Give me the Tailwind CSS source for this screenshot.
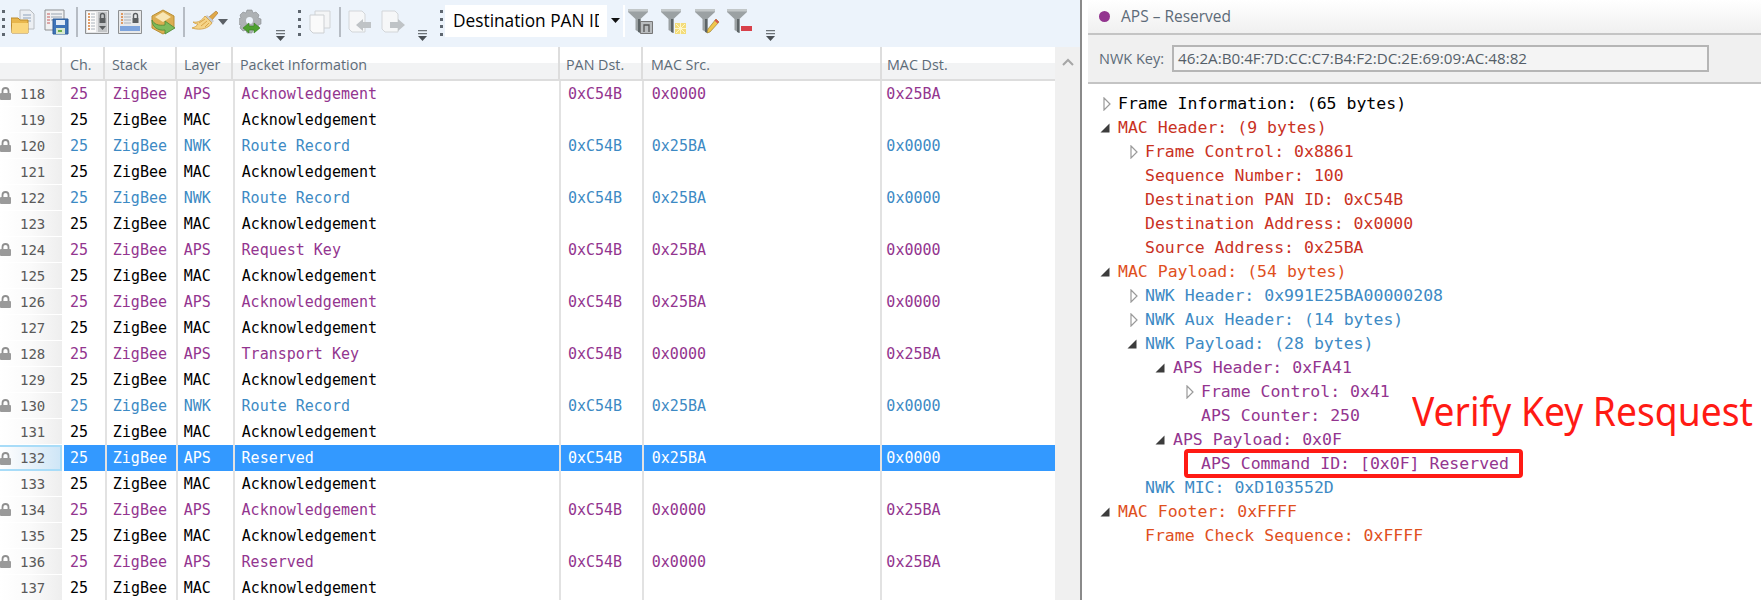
<!DOCTYPE html>
<html lang="en">
<head>
<meta charset="utf-8">
<title>Packet capture</title>
<script src="https://cdn.jsdelivr.net/npm/@tailwindcss/browser@4"></script>
</head>
<body class="bg-white overflow-hidden">
<svg width="0" height="0" class="absolute">
  <defs>
    <symbol id="lock" viewBox="0 0 11 13"><path d="M2.500 7V4a3 3 0 0 1 6 0V7" fill="none" stroke="#8f8f8f" stroke-width="1.800"/><rect x="0" y="6" width="11" height="7" rx="1" fill="#9a9a9a"/></symbol>
    <symbol id="grip" viewBox="0 0 3 26"><path d="M0 0h3v3H0zM0 8h3v3H0zM0 15h3v3H0zM0 23h3v3H0z" fill="#5f6770"/></symbol>
    <symbol id="over" viewBox="0 0 11 11"><path d="M1 0h9v1.200H1zM1 3h9v1.200H1z" fill="#6d7378"/><path d="M1 6h9l-4.500 5z" fill="#4a4f54"/></symbol>
    <symbol id="funnel" viewBox="0 0 20 26"><path d="M0 1h20v3l-7.500 7v14l-5-3V11L0 4z" fill="#9ba1a3"/><path d="M0 1h20v2.500H0z" fill="#c2c7c8"/><path d="M10 11h2.500v14L10 24z" fill="#5d6466"/></symbol>
    <symbol id="tr-o" viewBox="0 0 8 14"><path d="M1 1l6 6-6 6z" fill="#fff" stroke="#9a9a9a" stroke-width="1.200"/></symbol>
    <symbol id="tr-f" viewBox="0 0 10 10"><path d="M9.500 .5v9h-9z" fill="#3c3c3c"/></symbol>
  </defs>
</svg>

<div class="flex w-[1761px] h-[600px] overflow-hidden font-['Open_Sans',sans-serif]">
  <!-- LEFT PANE -->
  <div class="w-[1082px] shrink-0 flex flex-col border-r-2 border-[#8a8a8a] relative">
    <div class="absolute top-0 left-[133px] right-0 h-[2px] bg-[#666666]"></div>
    <!-- toolbar -->
    <div class="h-[47px] shrink-0 bg-[#ecf3fb] relative flex items-center pl-[2px]">
      <svg class="shrink-0 w-[3px] h-[26px] mt-[-2px]"><use href="#grip"/></svg>
      <!-- open -->
      <svg class="shrink-0 ml-[6px] mt-[-4px]" width="24" height="26" viewBox="0 0 24 26"><path d="M9 1h10l4 4v15H9z" fill="#eceff3" stroke="#b8bcc0"/><path d="M12 6h8M12 9h8M12 12h8" stroke="#8fa3bc"/><path d="M0 9h7l2 2h8v13H1z" fill="#e8b64c" stroke="#bb8a2c"/><path d="M1 14h16v10H1z" fill="#fad67c"/></svg>
      <!-- save -->
      <svg class="shrink-0 ml-[9px] mt-[-4px]" width="25" height="26" viewBox="0 0 25 26"><path d="M1 1h19v20H1z" fill="#f0f1f2" stroke="#8d8f91"/><path d="M3 5h3M3 8h3M3 11h3M3 14h3" stroke="#c75a5a"/><path d="M7 5h11M7 8h11M7 11h5" stroke="#9aa5b1"/><path d="M9 10h15v15H9z" fill="#3f74b8" stroke="#2c5a96"/><path d="M12 11h9v5h-9z" fill="#e3ecf6"/><path d="M12 19h9v6h-9z" fill="#d8e8d0"/><path d="M14 21h4v2h-4z" fill="#6bb04a"/></svg>
      <div class="shrink-0 w-[2px] h-[30px] bg-[#b6bcc4] ml-[7px] mt-[-3px]"></div>
      <!-- book lock -->
      <svg class="shrink-0 ml-[7px] mt-[-4px]" width="24" height="24" viewBox="0 0 24 24"><path d="M.5.500h23v23H.5z" fill="#e3e4e6" stroke="#8e9092"/><path d="M2 2h9v20H2z" fill="#fbfbfb"/><path d="M3 4h2M3 7h2M3 10h2M3 13h2M3 16h2M3 19h2" stroke="#d9803a" stroke-width="1.500"/><path d="M6 4h4M6 7h4M6 10h4M6 13h4M6 16h4M6 19h4" stroke="#aab2bb"/><path d="M13 2h9v20h-9z" fill="#c3c5c7"/><path d="M15.500 8V5.500a2 2 0 0 1 4 0V8" fill="none" stroke="#5b5e60" stroke-width="1.400"/><rect x="14.500" y="8" width="6" height="5" fill="#5b5e60"/><path d="M14 16h7l-3.500 4z" fill="#5b5e60"/></svg>
      <!-- list lock -->
      <svg class="shrink-0 ml-[9px] mt-[-4px]" width="24" height="24" viewBox="0 0 24 24"><path d="M.5.500h23v23H.5z" fill="#e8e9ea" stroke="#8e9092"/><path d="M3 4h2M3 7h2M3 10h2M3 13h2" stroke="#d9803a" stroke-width="1.500"/><path d="M6 4h7M6 7h7M6 10h7M6 13h7" stroke="#aab2bb"/><path d="M15.500 8V5.500a2 2 0 0 1 4 0V8" fill="none" stroke="#5b5e60" stroke-width="1.400"/><rect x="14.500" y="8" width="6" height="5" fill="#5b5e60"/><path d="M2 16h20v5H2z" fill="#7ea4dc"/></svg>
      <!-- hex -->
      <svg class="shrink-0 ml-[9px] mt-[-4px]" width="25" height="26" viewBox="0 0 25 26"><path d="M12 1l11 6v12l-11 6-11-6V7z" fill="#dcae52" stroke="#b98f34"/><path d="M12 3l8 5-8 5-8-5z" fill="#f8e6b4"/><path d="M1 11c2 4 6 6 13 5v-4l10 7-10 6v-4C7 22 1 18 1 11z" fill="#7dbb5c" stroke="#4d8a36" stroke-width=".8"/></svg>
      <div class="shrink-0 w-[2px] h-[30px] bg-[#b6bcc4] ml-[7px] mt-[-3px]"></div>
      <!-- brush -->
      <svg class="shrink-0 ml-[7px] mt-[-5px]" width="26" height="22" viewBox="0 0 26 22"><path d="M17 7l7-6 2 2-6 7z" fill="#e0a848" stroke="#a5702a" stroke-width=".6"/><path d="M15 5l7 6-2 2-7-6z" fill="#c7cace"/><path d="M13 6l7 7c-3 5-11 8-20 5 3-1 5-2 6-4-2 0-4-1-5-2 6 1 9-2 12-6z" fill="#f5d488" stroke="#cf9c3f" stroke-width=".8"/><path d="M7 13l6-4M9 16l6-5M13 17l4-4" stroke="#d9a448"/></svg>
      <svg class="shrink-0 mt-[-4px]" width="10" height="6" viewBox="0 0 10 6"><path d="M0 0h10L5 6z" fill="#5b6066"/></svg>
      <!-- gear -->
      <svg class="shrink-0 ml-[11px] mt-[-4px]" width="25" height="26" viewBox="0 0 25 26"><path d="M8 1h5l1 3 3-1 3 3-1 3 3 1v5l-3 1 1 3-3 3-3-1-1 3H8l-1-3-3 1-3-3 1-3-3-1v-5l3-1-1-3 3-3 3 1z" fill="#adb1b4" stroke="#888c8f" stroke-width=".6"/><circle cx="10.500" cy="11.500" r="3.500" fill="#ecf3fb"/><path d="M4 19l6-5v3h5v-3l6 5-6 5v-3h-5v3z" fill="#4ea12f" stroke="#357d1c" stroke-width=".6"/></svg>
      <svg class="shrink-0 ml-[11px] mt-[23px] w-[11px] h-[11px]"><use href="#over"/></svg>
      <svg class="shrink-0 ml-[12px] mt-[-2px] w-[3px] h-[26px]"><use href="#grip"/></svg>
      <!-- copy -->
      <svg class="shrink-0 ml-[8px] mt-[-3px]" width="22" height="24" viewBox="0 0 22 24"><path d="M6 1h15v17H6z" fill="#f4f5f6" stroke="#d0d3d6"/><path d="M1 5h14v18H4l-3-3z" fill="#fafafa" stroke="#cdd0d3"/></svg>
      <div class="shrink-0 w-[2px] h-[30px] bg-[#b6bcc4] ml-[8px] mt-[-3px]"></div>
      <!-- prev -->
      <svg class="shrink-0 ml-[7px] mt-[-3px]" width="24" height="24" viewBox="0 0 24 24"><path d="M1 1h13l3 3v18H4l-3-3z" fill="#f6f7f8" stroke="#d3d6d9"/><path d="M8 15l7-6v3h8v6h-8v3z" fill="#bfc3c6"/></svg>
      <!-- next -->
      <svg class="shrink-0 ml-[9px] mt-[-3px]" width="24" height="24" viewBox="0 0 24 24"><path d="M1 1h13l3 3v18H4l-3-3z" fill="#f6f7f8" stroke="#d3d6d9"/><path d="M24 15l-7-6v3H9v6h8v3z" fill="#bfc3c6"/></svg>
      <svg class="shrink-0 ml-[12px] mt-[23px] w-[11px] h-[11px]"><use href="#over"/></svg>
      <svg class="shrink-0 ml-[12px] mt-[-2px] w-[3px] h-[26px]"><use href="#grip"/></svg>
      <!-- combo -->
      <div class="shrink-0 ml-[2px] w-[180px] h-[32px] bg-white flex items-center mt-[-6px]">
        <span class="w-[154px] pl-[8px] overflow-hidden whitespace-nowrap text-[17.3px] text-black">Destination PAN ID</span>
        <span class="ml-[8px] w-[16px] h-[32px] bg-[#ecf3fb] flex items-center justify-center"><svg width="9" height="5" viewBox="0 0 9 5"><path d="M0 0h9L4.500 5z" fill="#111"/></svg></span>
      </div>
      <!-- funnels -->
      <div class="relative shrink-0 ml-[3px] w-[25px] h-[26px] mt-[-6px]"><svg class="w-[20px] h-[26px]"><use href="#funnel"/></svg><svg class="absolute right-0 bottom-0" width="13" height="13" viewBox="0 0 13 13"><path d="M.5.500h12v12H.5z" fill="#b9bcbe" stroke="#777"/><path d="M4 11V4h5v7" fill="none" stroke="#555" stroke-width="1.300"/></svg></div>
      <div class="relative shrink-0 ml-[8px] w-[25px] h-[26px] mt-[-6px]"><svg class="w-[20px] h-[26px]"><use href="#funnel"/></svg><svg class="absolute right-0 bottom-0" width="11" height="11" viewBox="0 0 11 11"><path d="M0 0h11v11H0z" fill="#f3dc7a"/><path d="M5.500 0v11M0 5.500h11M1 1l9 9M10 1l-9 9" stroke="#fff6c8"/></svg></div>
      <div class="relative shrink-0 ml-[9px] w-[25px] h-[26px] mt-[-6px]"><svg class="w-[20px] h-[26px]"><use href="#funnel"/></svg><svg class="absolute right-0 bottom-0" width="14" height="16" viewBox="0 0 14 16"><path d="M10 1l3 3-9 10-3 1 1-4z" fill="#f0c64c" stroke="#8f7324" stroke-width=".6"/><path d="M10 1l3 3-1.500 1.500-3-3z" fill="#d8564c"/></svg></div>
      <div class="relative shrink-0 ml-[7px] w-[25px] h-[26px] mt-[-6px]"><svg class="w-[20px] h-[26px]"><use href="#funnel"/></svg><div class="absolute right-0 bottom-[3px] w-[11px] h-[5px] bg-[#d8404a]"></div></div>
      <svg class="shrink-0 ml-[13px] mt-[23px] w-[11px] h-[11px]"><use href="#over"/></svg>
    </div>

    <!-- table -->
    <div class="flex-1 flex min-h-0 bg-white">
      <div class="w-[1055px] shrink-0 overflow-hidden">
        <!-- header -->
        <div class="h-[34px] flex text-[14.3px] text-[#5d6b78] bg-[linear-gradient(#ffffff_0,#ffffff_16px,#f2f3f4_16px,#f2f3f4_100%)] border-b-[2px] border-[#dddddd]">
          <div class="w-[62px] border-r-[2px] border-[#dddddd]"></div>
          <div class="w-[43px] pl-[8px] pt-[7px] border-r-[2px] border-[#dddddd]">Ch.</div>
          <div class="w-[72px] pl-[7px] pt-[7px] border-r-[2px] border-[#dddddd]">Stack</div>
          <div class="w-[56px] pl-[7px] pt-[7px] border-r-[2px] border-[#dddddd]">Layer</div>
          <div class="w-[327px] pl-[7px] pt-[7px] border-r-[2px] border-[#dddddd]">Packet Information</div>
          <div class="w-[83px] pl-[6px] pt-[7px] border-r-[2px] border-[#dddddd]">PAN Dst.</div>
          <div class="w-[239px] pl-[8px] pt-[7px] border-r-[2px] border-[#dddddd]">MAC Src.</div>
          <div class="w-[173px] pl-[5px] pt-[7px]">MAC Dst.</div>
        </div>
        <!-- rows -->
        <div class="font-['DejaVu_Sans_Mono',monospace] text-[15px] leading-[26px] whitespace-nowrap">
          <div class="h-[26px] flex text-[#93358f]"><div class="w-[62px] mr-[2px] h-[25px] bg-[linear-gradient(90deg,#ffffff,#fafafa_50%,#eeeeee)] flex items-center"><svg class="w-[11px] h-[13px]"><use href="#lock"/></svg><span class="ml-[9px] text-[14px] text-[#5a5a5a]">118</span></div><div class="w-[41px] pl-[6px]">25</div><div class="w-[71px] pl-[6px] border-l-[2px] border-[#e2e2e2]">ZigBee</div><div class="w-[57px] pl-[6px] border-l-[2px] border-[#e2e2e2]">APS</div><div class="w-[327px] pl-[7px] border-l-[2px] border-[#e2e2e2]">Acknowledgement</div><div class="w-[83px] pl-[7px] border-l-[2px] border-[#e2e2e2]">0xC54B</div><div class="w-[239px] pl-[8px] border-l-[2px] border-[#e2e2e2]">0x0000</div><div class="w-[175px] pl-[4px] border-l-[2px] border-[#e2e2e2]">0x25BA</div></div>
          <div class="h-[26px] flex text-black"><div class="w-[62px] mr-[2px] h-[25px] bg-[linear-gradient(90deg,#ffffff,#fafafa_50%,#eeeeee)] flex items-center pl-[20px]"><span class="text-[14px] text-[#5a5a5a]">119</span></div><div class="w-[41px] pl-[6px]">25</div><div class="w-[71px] pl-[6px] border-l-[2px] border-[#e2e2e2]">ZigBee</div><div class="w-[57px] pl-[6px] border-l-[2px] border-[#e2e2e2]">MAC</div><div class="w-[327px] pl-[7px] border-l-[2px] border-[#e2e2e2]">Acknowledgement</div><div class="w-[83px] border-l-[2px] border-[#e2e2e2]"></div><div class="w-[239px] border-l-[2px] border-[#e2e2e2]"></div><div class="w-[175px] border-l-[2px] border-[#e2e2e2]"></div></div>
          <div class="h-[26px] flex text-[#3d8ac4]"><div class="w-[62px] mr-[2px] h-[25px] bg-[linear-gradient(90deg,#ffffff,#fafafa_50%,#eeeeee)] flex items-center"><svg class="w-[11px] h-[13px]"><use href="#lock"/></svg><span class="ml-[9px] text-[14px] text-[#5a5a5a]">120</span></div><div class="w-[41px] pl-[6px]">25</div><div class="w-[71px] pl-[6px] border-l-[2px] border-[#e2e2e2]">ZigBee</div><div class="w-[57px] pl-[6px] border-l-[2px] border-[#e2e2e2]">NWK</div><div class="w-[327px] pl-[7px] border-l-[2px] border-[#e2e2e2]">Route Record</div><div class="w-[83px] pl-[7px] border-l-[2px] border-[#e2e2e2]">0xC54B</div><div class="w-[239px] pl-[8px] border-l-[2px] border-[#e2e2e2]">0x25BA</div><div class="w-[175px] pl-[4px] border-l-[2px] border-[#e2e2e2]">0x0000</div></div>
          <div class="h-[26px] flex text-black"><div class="w-[62px] mr-[2px] h-[25px] bg-[linear-gradient(90deg,#ffffff,#fafafa_50%,#eeeeee)] flex items-center pl-[20px]"><span class="text-[14px] text-[#5a5a5a]">121</span></div><div class="w-[41px] pl-[6px]">25</div><div class="w-[71px] pl-[6px] border-l-[2px] border-[#e2e2e2]">ZigBee</div><div class="w-[57px] pl-[6px] border-l-[2px] border-[#e2e2e2]">MAC</div><div class="w-[327px] pl-[7px] border-l-[2px] border-[#e2e2e2]">Acknowledgement</div><div class="w-[83px] border-l-[2px] border-[#e2e2e2]"></div><div class="w-[239px] border-l-[2px] border-[#e2e2e2]"></div><div class="w-[175px] border-l-[2px] border-[#e2e2e2]"></div></div>
          <div class="h-[26px] flex text-[#3d8ac4]"><div class="w-[62px] mr-[2px] h-[25px] bg-[linear-gradient(90deg,#ffffff,#fafafa_50%,#eeeeee)] flex items-center"><svg class="w-[11px] h-[13px]"><use href="#lock"/></svg><span class="ml-[9px] text-[14px] text-[#5a5a5a]">122</span></div><div class="w-[41px] pl-[6px]">25</div><div class="w-[71px] pl-[6px] border-l-[2px] border-[#e2e2e2]">ZigBee</div><div class="w-[57px] pl-[6px] border-l-[2px] border-[#e2e2e2]">NWK</div><div class="w-[327px] pl-[7px] border-l-[2px] border-[#e2e2e2]">Route Record</div><div class="w-[83px] pl-[7px] border-l-[2px] border-[#e2e2e2]">0xC54B</div><div class="w-[239px] pl-[8px] border-l-[2px] border-[#e2e2e2]">0x25BA</div><div class="w-[175px] pl-[4px] border-l-[2px] border-[#e2e2e2]">0x0000</div></div>
          <div class="h-[26px] flex text-black"><div class="w-[62px] mr-[2px] h-[25px] bg-[linear-gradient(90deg,#ffffff,#fafafa_50%,#eeeeee)] flex items-center pl-[20px]"><span class="text-[14px] text-[#5a5a5a]">123</span></div><div class="w-[41px] pl-[6px]">25</div><div class="w-[71px] pl-[6px] border-l-[2px] border-[#e2e2e2]">ZigBee</div><div class="w-[57px] pl-[6px] border-l-[2px] border-[#e2e2e2]">MAC</div><div class="w-[327px] pl-[7px] border-l-[2px] border-[#e2e2e2]">Acknowledgement</div><div class="w-[83px] border-l-[2px] border-[#e2e2e2]"></div><div class="w-[239px] border-l-[2px] border-[#e2e2e2]"></div><div class="w-[175px] border-l-[2px] border-[#e2e2e2]"></div></div>
          <div class="h-[26px] flex text-[#93358f]"><div class="w-[62px] mr-[2px] h-[25px] bg-[linear-gradient(90deg,#ffffff,#fafafa_50%,#eeeeee)] flex items-center"><svg class="w-[11px] h-[13px]"><use href="#lock"/></svg><span class="ml-[9px] text-[14px] text-[#5a5a5a]">124</span></div><div class="w-[41px] pl-[6px]">25</div><div class="w-[71px] pl-[6px] border-l-[2px] border-[#e2e2e2]">ZigBee</div><div class="w-[57px] pl-[6px] border-l-[2px] border-[#e2e2e2]">APS</div><div class="w-[327px] pl-[7px] border-l-[2px] border-[#e2e2e2]">Request Key</div><div class="w-[83px] pl-[7px] border-l-[2px] border-[#e2e2e2]">0xC54B</div><div class="w-[239px] pl-[8px] border-l-[2px] border-[#e2e2e2]">0x25BA</div><div class="w-[175px] pl-[4px] border-l-[2px] border-[#e2e2e2]">0x0000</div></div>
          <div class="h-[26px] flex text-black"><div class="w-[62px] mr-[2px] h-[25px] bg-[linear-gradient(90deg,#ffffff,#fafafa_50%,#eeeeee)] flex items-center pl-[20px]"><span class="text-[14px] text-[#5a5a5a]">125</span></div><div class="w-[41px] pl-[6px]">25</div><div class="w-[71px] pl-[6px] border-l-[2px] border-[#e2e2e2]">ZigBee</div><div class="w-[57px] pl-[6px] border-l-[2px] border-[#e2e2e2]">MAC</div><div class="w-[327px] pl-[7px] border-l-[2px] border-[#e2e2e2]">Acknowledgement</div><div class="w-[83px] border-l-[2px] border-[#e2e2e2]"></div><div class="w-[239px] border-l-[2px] border-[#e2e2e2]"></div><div class="w-[175px] border-l-[2px] border-[#e2e2e2]"></div></div>
          <div class="h-[26px] flex text-[#93358f]"><div class="w-[62px] mr-[2px] h-[25px] bg-[linear-gradient(90deg,#ffffff,#fafafa_50%,#eeeeee)] flex items-center"><svg class="w-[11px] h-[13px]"><use href="#lock"/></svg><span class="ml-[9px] text-[14px] text-[#5a5a5a]">126</span></div><div class="w-[41px] pl-[6px]">25</div><div class="w-[71px] pl-[6px] border-l-[2px] border-[#e2e2e2]">ZigBee</div><div class="w-[57px] pl-[6px] border-l-[2px] border-[#e2e2e2]">APS</div><div class="w-[327px] pl-[7px] border-l-[2px] border-[#e2e2e2]">Acknowledgement</div><div class="w-[83px] pl-[7px] border-l-[2px] border-[#e2e2e2]">0xC54B</div><div class="w-[239px] pl-[8px] border-l-[2px] border-[#e2e2e2]">0x25BA</div><div class="w-[175px] pl-[4px] border-l-[2px] border-[#e2e2e2]">0x0000</div></div>
          <div class="h-[26px] flex text-black"><div class="w-[62px] mr-[2px] h-[25px] bg-[linear-gradient(90deg,#ffffff,#fafafa_50%,#eeeeee)] flex items-center pl-[20px]"><span class="text-[14px] text-[#5a5a5a]">127</span></div><div class="w-[41px] pl-[6px]">25</div><div class="w-[71px] pl-[6px] border-l-[2px] border-[#e2e2e2]">ZigBee</div><div class="w-[57px] pl-[6px] border-l-[2px] border-[#e2e2e2]">MAC</div><div class="w-[327px] pl-[7px] border-l-[2px] border-[#e2e2e2]">Acknowledgement</div><div class="w-[83px] border-l-[2px] border-[#e2e2e2]"></div><div class="w-[239px] border-l-[2px] border-[#e2e2e2]"></div><div class="w-[175px] border-l-[2px] border-[#e2e2e2]"></div></div>
          <div class="h-[26px] flex text-[#93358f]"><div class="w-[62px] mr-[2px] h-[25px] bg-[linear-gradient(90deg,#ffffff,#fafafa_50%,#eeeeee)] flex items-center"><svg class="w-[11px] h-[13px]"><use href="#lock"/></svg><span class="ml-[9px] text-[14px] text-[#5a5a5a]">128</span></div><div class="w-[41px] pl-[6px]">25</div><div class="w-[71px] pl-[6px] border-l-[2px] border-[#e2e2e2]">ZigBee</div><div class="w-[57px] pl-[6px] border-l-[2px] border-[#e2e2e2]">APS</div><div class="w-[327px] pl-[7px] border-l-[2px] border-[#e2e2e2]">Transport Key</div><div class="w-[83px] pl-[7px] border-l-[2px] border-[#e2e2e2]">0xC54B</div><div class="w-[239px] pl-[8px] border-l-[2px] border-[#e2e2e2]">0x0000</div><div class="w-[175px] pl-[4px] border-l-[2px] border-[#e2e2e2]">0x25BA</div></div>
          <div class="h-[26px] flex text-black"><div class="w-[62px] mr-[2px] h-[25px] bg-[linear-gradient(90deg,#ffffff,#fafafa_50%,#eeeeee)] flex items-center pl-[20px]"><span class="text-[14px] text-[#5a5a5a]">129</span></div><div class="w-[41px] pl-[6px]">25</div><div class="w-[71px] pl-[6px] border-l-[2px] border-[#e2e2e2]">ZigBee</div><div class="w-[57px] pl-[6px] border-l-[2px] border-[#e2e2e2]">MAC</div><div class="w-[327px] pl-[7px] border-l-[2px] border-[#e2e2e2]">Acknowledgement</div><div class="w-[83px] border-l-[2px] border-[#e2e2e2]"></div><div class="w-[239px] border-l-[2px] border-[#e2e2e2]"></div><div class="w-[175px] border-l-[2px] border-[#e2e2e2]"></div></div>
          <div class="h-[26px] flex text-[#3d8ac4]"><div class="w-[62px] mr-[2px] h-[25px] bg-[linear-gradient(90deg,#ffffff,#fafafa_50%,#eeeeee)] flex items-center"><svg class="w-[11px] h-[13px]"><use href="#lock"/></svg><span class="ml-[9px] text-[14px] text-[#5a5a5a]">130</span></div><div class="w-[41px] pl-[6px]">25</div><div class="w-[71px] pl-[6px] border-l-[2px] border-[#e2e2e2]">ZigBee</div><div class="w-[57px] pl-[6px] border-l-[2px] border-[#e2e2e2]">NWK</div><div class="w-[327px] pl-[7px] border-l-[2px] border-[#e2e2e2]">Route Record</div><div class="w-[83px] pl-[7px] border-l-[2px] border-[#e2e2e2]">0xC54B</div><div class="w-[239px] pl-[8px] border-l-[2px] border-[#e2e2e2]">0x25BA</div><div class="w-[175px] pl-[4px] border-l-[2px] border-[#e2e2e2]">0x0000</div></div>
          <div class="h-[26px] flex text-black"><div class="w-[62px] mr-[2px] h-[25px] bg-[linear-gradient(90deg,#ffffff,#fafafa_50%,#eeeeee)] flex items-center pl-[20px]"><span class="text-[14px] text-[#5a5a5a]">131</span></div><div class="w-[41px] pl-[6px]">25</div><div class="w-[71px] pl-[6px] border-l-[2px] border-[#e2e2e2]">ZigBee</div><div class="w-[57px] pl-[6px] border-l-[2px] border-[#e2e2e2]">MAC</div><div class="w-[327px] pl-[7px] border-l-[2px] border-[#e2e2e2]">Acknowledgement</div><div class="w-[83px] border-l-[2px] border-[#e2e2e2]"></div><div class="w-[239px] border-l-[2px] border-[#e2e2e2]"></div><div class="w-[175px] border-l-[2px] border-[#e2e2e2]"></div></div>
          <div class="h-[26px] flex text-white"><div class="w-[62px] mr-[2px] h-[26px] bg-[linear-gradient(90deg,#ffffff,#f2f7fb_30%,#cfe6f7)] border-y-[2px] border-r-[2px] border-[#a8dcf8] flex items-center"><svg class="w-[11px] h-[13px]"><use href="#lock"/></svg><span class="ml-[9px] text-[14px] text-[#5a5a5a]">132</span></div><div class="w-[41px] pl-[6px] bg-[#3399ff]">25</div><div class="w-[71px] pl-[6px] bg-[#3399ff] border-l-[2px] border-[#e2e2e2]">ZigBee</div><div class="w-[57px] pl-[6px] bg-[#3399ff] border-l-[2px] border-[#e2e2e2]">APS</div><div class="w-[327px] pl-[7px] bg-[#3399ff] border-l-[2px] border-[#e2e2e2]">Reserved</div><div class="w-[83px] pl-[7px] bg-[#3399ff] border-l-[2px] border-[#e2e2e2]">0xC54B</div><div class="w-[239px] pl-[8px] bg-[#3399ff] border-l-[2px] border-[#e2e2e2]">0x25BA</div><div class="w-[175px] pl-[4px] bg-[#3399ff] border-l-[2px] border-[#e2e2e2]">0x0000</div></div>
          <div class="h-[26px] flex text-black"><div class="w-[62px] mr-[2px] h-[25px] bg-[linear-gradient(90deg,#ffffff,#fafafa_50%,#eeeeee)] flex items-center pl-[20px]"><span class="text-[14px] text-[#5a5a5a]">133</span></div><div class="w-[41px] pl-[6px]">25</div><div class="w-[71px] pl-[6px] border-l-[2px] border-[#e2e2e2]">ZigBee</div><div class="w-[57px] pl-[6px] border-l-[2px] border-[#e2e2e2]">MAC</div><div class="w-[327px] pl-[7px] border-l-[2px] border-[#e2e2e2]">Acknowledgement</div><div class="w-[83px] border-l-[2px] border-[#e2e2e2]"></div><div class="w-[239px] border-l-[2px] border-[#e2e2e2]"></div><div class="w-[175px] border-l-[2px] border-[#e2e2e2]"></div></div>
          <div class="h-[26px] flex text-[#93358f]"><div class="w-[62px] mr-[2px] h-[25px] bg-[linear-gradient(90deg,#ffffff,#fafafa_50%,#eeeeee)] flex items-center"><svg class="w-[11px] h-[13px]"><use href="#lock"/></svg><span class="ml-[9px] text-[14px] text-[#5a5a5a]">134</span></div><div class="w-[41px] pl-[6px]">25</div><div class="w-[71px] pl-[6px] border-l-[2px] border-[#e2e2e2]">ZigBee</div><div class="w-[57px] pl-[6px] border-l-[2px] border-[#e2e2e2]">APS</div><div class="w-[327px] pl-[7px] border-l-[2px] border-[#e2e2e2]">Acknowledgement</div><div class="w-[83px] pl-[7px] border-l-[2px] border-[#e2e2e2]">0xC54B</div><div class="w-[239px] pl-[8px] border-l-[2px] border-[#e2e2e2]">0x0000</div><div class="w-[175px] pl-[4px] border-l-[2px] border-[#e2e2e2]">0x25BA</div></div>
          <div class="h-[26px] flex text-black"><div class="w-[62px] mr-[2px] h-[25px] bg-[linear-gradient(90deg,#ffffff,#fafafa_50%,#eeeeee)] flex items-center pl-[20px]"><span class="text-[14px] text-[#5a5a5a]">135</span></div><div class="w-[41px] pl-[6px]">25</div><div class="w-[71px] pl-[6px] border-l-[2px] border-[#e2e2e2]">ZigBee</div><div class="w-[57px] pl-[6px] border-l-[2px] border-[#e2e2e2]">MAC</div><div class="w-[327px] pl-[7px] border-l-[2px] border-[#e2e2e2]">Acknowledgement</div><div class="w-[83px] border-l-[2px] border-[#e2e2e2]"></div><div class="w-[239px] border-l-[2px] border-[#e2e2e2]"></div><div class="w-[175px] border-l-[2px] border-[#e2e2e2]"></div></div>
          <div class="h-[26px] flex text-[#93358f]"><div class="w-[62px] mr-[2px] h-[25px] bg-[linear-gradient(90deg,#ffffff,#fafafa_50%,#eeeeee)] flex items-center"><svg class="w-[11px] h-[13px]"><use href="#lock"/></svg><span class="ml-[9px] text-[14px] text-[#5a5a5a]">136</span></div><div class="w-[41px] pl-[6px]">25</div><div class="w-[71px] pl-[6px] border-l-[2px] border-[#e2e2e2]">ZigBee</div><div class="w-[57px] pl-[6px] border-l-[2px] border-[#e2e2e2]">APS</div><div class="w-[327px] pl-[7px] border-l-[2px] border-[#e2e2e2]">Reserved</div><div class="w-[83px] pl-[7px] border-l-[2px] border-[#e2e2e2]">0xC54B</div><div class="w-[239px] pl-[8px] border-l-[2px] border-[#e2e2e2]">0x0000</div><div class="w-[175px] pl-[4px] border-l-[2px] border-[#e2e2e2]">0x25BA</div></div>
          <div class="h-[26px] flex text-black"><div class="w-[62px] mr-[2px] h-[25px] bg-[linear-gradient(90deg,#ffffff,#fafafa_50%,#eeeeee)] flex items-center pl-[20px]"><span class="text-[14px] text-[#5a5a5a]">137</span></div><div class="w-[41px] pl-[6px]">25</div><div class="w-[71px] pl-[6px] border-l-[2px] border-[#e2e2e2]">ZigBee</div><div class="w-[57px] pl-[6px] border-l-[2px] border-[#e2e2e2]">MAC</div><div class="w-[327px] pl-[7px] border-l-[2px] border-[#e2e2e2]">Acknowledgement</div><div class="w-[83px] border-l-[2px] border-[#e2e2e2]"></div><div class="w-[239px] border-l-[2px] border-[#e2e2e2]"></div><div class="w-[175px] border-l-[2px] border-[#e2e2e2]"></div></div>
        </div>
      </div>
      <!-- scrollbar -->
      <div class="flex-1 bg-[#f0f0f0] flex justify-center pt-[11px]">
        <svg width="12" height="8" viewBox="0 0 12 8"><path d="M1 7l5-5 5 5" fill="none" stroke="#a6a6a6" stroke-width="2"/></svg>
      </div>
    </div>
  </div>

  <!-- RIGHT PANE -->
  <div class="ml-[6px] flex-1 flex flex-col relative min-w-0">
    <div class="h-[33px] shrink-0 bg-[linear-gradient(#ffffff,#f0f0f0)] flex items-center pl-[11px] text-[15.5px] text-[#5d6b78]">
      <span class="w-[11px] h-[11px] rounded-full bg-[#93358f]"></span>
      <span class="ml-[11px]">APS – Reserved</span>
    </div>
    <div class="h-[51px] shrink-0 bg-[#f0f0f0] border-y-[2px] border-[#c4c4c4] flex items-center pl-[11px] text-[14.5px] text-[#5d6b78]">
      <span>NWK Key:</span>
      <div class="ml-[8px] w-[537px] h-[27px] bg-[#f4f4f4] border-[2px] border-[#b5b5b5] pl-[4px] flex items-center text-[15.2px] text-[#555f69] whitespace-nowrap">46:2A:B0:4F:7D:CC:C7:B4:F2:DC:2E:69:09:AC:48:82</div>
    </div>
    <div class="flex-1 pt-[8px] font-['DejaVu_Sans_Mono',monospace] text-[16.5px] whitespace-nowrap bg-white">
      <div class="h-6 flex items-center pl-[12px] text-black"><svg class="w-[8px] h-[14px] ml-[3px] mr-[7px]"><use href="#tr-o"/></svg>Frame Information: (65 bytes)</div>
      <div class="h-6 flex items-center pl-[12px] text-[#c9321f]"><svg class="w-[10px] h-[10px] mr-[8px]"><use href="#tr-f"/></svg>MAC Header: (9 bytes)</div>
      <div class="h-6 flex items-center pl-[39px] text-[#c9321f]"><svg class="w-[8px] h-[14px] ml-[3px] mr-[7px]"><use href="#tr-o"/></svg>Frame Control: 0x8861</div>
      <div class="h-6 flex items-center pl-[57px] text-[#c9321f]">Sequence Number: 100</div>
      <div class="h-6 flex items-center pl-[57px] text-[#c9321f]">Destination PAN ID: 0xC54B</div>
      <div class="h-6 flex items-center pl-[57px] text-[#c9321f]">Destination Address: 0x0000</div>
      <div class="h-6 flex items-center pl-[57px] text-[#c9321f]">Source Address: 0x25BA</div>
      <div class="h-6 flex items-center pl-[12px] text-[#e0501e]"><svg class="w-[10px] h-[10px] mr-[8px]"><use href="#tr-f"/></svg>MAC Payload: (54 bytes)</div>
      <div class="h-6 flex items-center pl-[39px] text-[#3d8ac4]"><svg class="w-[8px] h-[14px] ml-[3px] mr-[7px]"><use href="#tr-o"/></svg>NWK Header: 0x991E25BA00000208</div>
      <div class="h-6 flex items-center pl-[39px] text-[#3d8ac4]"><svg class="w-[8px] h-[14px] ml-[3px] mr-[7px]"><use href="#tr-o"/></svg>NWK Aux Header: (14 bytes)</div>
      <div class="h-6 flex items-center pl-[39px] text-[#3d8ac4]"><svg class="w-[10px] h-[10px] mr-[8px]"><use href="#tr-f"/></svg>NWK Payload: (28 bytes)</div>
      <div class="h-6 flex items-center pl-[67px] text-[#93358f]"><svg class="w-[10px] h-[10px] mr-[8px]"><use href="#tr-f"/></svg>APS Header: 0xFA41</div>
      <div class="h-6 flex items-center pl-[95px] text-[#93358f]"><svg class="w-[8px] h-[14px] ml-[3px] mr-[7px]"><use href="#tr-o"/></svg>Frame Control: 0x41</div>
      <div class="h-6 flex items-center pl-[113px] text-[#93358f]">APS Counter: 250</div>
      <div class="h-6 flex items-center pl-[67px] text-[#93358f]"><svg class="w-[10px] h-[10px] mr-[8px]"><use href="#tr-f"/></svg>APS Payload: 0x0F</div>
      <div class="h-6 flex items-center pl-[113px] text-[#93358f]">APS Command ID: [0x0F] Reserved</div>
      <div class="h-6 flex items-center pl-[57px] text-[#3d8ac4]">NWK MIC: 0xD103552D</div>
      <div class="h-6 flex items-center pl-[12px] text-[#e0501e]"><svg class="w-[10px] h-[10px] mr-[8px]"><use href="#tr-f"/></svg>MAC Footer: 0xFFFF</div>
      <div class="h-6 flex items-center pl-[57px] text-[#e0501e]">Frame Check Sequence: 0xFFFF</div>
    </div>
    <!-- annotation overlays -->
    <div class="absolute left-[96px] top-[449px] w-[339px] h-[29px] border-[4px] border-[#ff1a14] rounded-[4px]"></div>
    <div class="absolute left-[324px] top-[386px] text-[40px] leading-[50px] text-[#ff1a14] whitespace-nowrap origin-left scale-x-[0.93] font-['Noto_Sans',sans-serif]">Verify Key Resquest</div>
  </div>
</div>
</body>
</html>
